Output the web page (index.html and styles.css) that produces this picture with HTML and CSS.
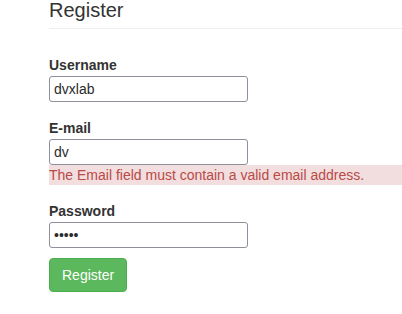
FILE: index.html
```html
<!DOCTYPE html>
<html>
<head>
<meta charset="utf-8">
<link rel="stylesheet" href="styles.css">
</head>
<body>
<div class="page">
  <h3 class="title">Register</h3>
  <form class="form">
    <div class="group">
      <label class="label" for="username">Username</label>
      <input class="field" id="username" type="text" value="dvxlab">
    </div>
    <div class="group">
      <label class="label" for="email">E-mail</label>
      <input class="field" id="email" type="text" value="dv">
      <div class="error">The Email field must contain a valid email address.</div>
    </div>
    <div class="group">
      <label class="label" for="password">Password</label>
      <input class="field" id="password" type="password" value="12345">
    </div>
    <button class="btn" type="button">Register</button>
  </form>
</div>
</body>
</html>
```
FILE: styles.css
```css
html, body {
  margin: 0;
  padding: 0;
  background: #fff;
}
body {
  font-family: "Liberation Sans", Arial, sans-serif;
  color: #333;
}
.page {
  padding-left: 49px;
}
.title {
  margin: 0 0 26px 0;
  padding-bottom: 8px;
  font-size: 20px;
  line-height: 20px;
  font-weight: normal;
  color: #333;
  border-bottom: 1px solid #eee;
}
.form {
  display: flex;
  flex-direction: column;
  align-items: flex-start;
}
.group {
  display: flex;
  flex-direction: column;
  align-items: flex-start;
  align-self: stretch;
  margin-bottom: 16px;
}
.label {
  font-size: 14px;
  line-height: 20px;
  font-weight: bold;
  color: #333;
  margin-bottom: 1px;
}
.field {
  box-sizing: border-box;
  width: 199px;
  height: 26px;
  margin: 0;
  padding: 0 4px;
  border: 1px solid #8f8f9d;
  border-radius: 3px;
  font-family: "Liberation Sans", Arial, sans-serif;
  font-size: 14px;
  color: #2b2b2b;
  background: #fff;
  outline: none;
}
.error {
  align-self: stretch;
  height: 20px;
  font-size: 14px;
  line-height: 20px;
  color: #b94a48;
  background: #f2dede;
}
.group:last-of-type {
  margin-bottom: 10px;
}
.btn {
  box-sizing: border-box;
  height: 34px;
  padding: 0 12px;
  margin: 0;
  font-family: "Liberation Sans", Arial, sans-serif;
  font-size: 14px;
  line-height: 20px;
  color: #fff;
  background: #5cb85c;
  border: 1px solid #4cae4c;
  border-radius: 4px;
}
```
